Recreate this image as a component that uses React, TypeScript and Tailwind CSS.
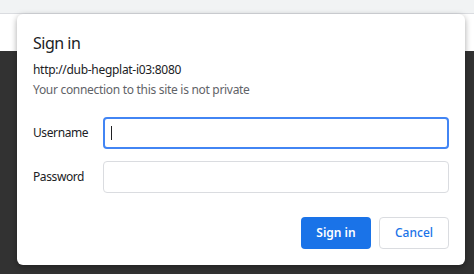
import React from 'react';

const font = { fontFamily: '"Noto Sans", "Open Sans", sans-serif' };

function Field({ label, focused }: { label: string; focused?: boolean }) {
  return (
    <div className="flex items-center h-[32px]">
      <div className="w-[70px] shrink-0 text-[12px] tracking-[-0.4px] text-[#202124]">{label}</div>
      <div
        className={`flex-1 h-[32px] rounded-[4px] flex items-center ${
          focused ? 'border-2 border-[#4285f4] pl-[6px]' : 'border border-[#dadce0] pl-[7px]'
        }`}
      >
        {focused && <span className="block w-px h-[14px] bg-[#202124]" />}
      </div>
    </div>
  );
}

export default function App() {
  return (
    <div className="relative w-[474px] h-[274px] overflow-hidden flex flex-col" style={font}>
      {/* browser behind the dialog */}
      <div className="h-[14px] bg-[#f1f3f4] border-b border-[#dadce0]" />
      <div className="h-[37px] bg-white" />
      <div className="flex-1 bg-[#323232]" />

      {/* Sign in dialog */}
      <div className="absolute left-[17px] top-[14px] w-[448px] h-[251px] bg-white rounded-[6px] shadow-[0_2px_6px_rgba(0,0,0,0.35)] px-[16px] pt-[17px] pb-[16px] flex flex-col">
        <div className="text-[16px] leading-[24px] tracking-[-0.5px] text-[#202124]">Sign in</div>
        <div className="mt-[5px] text-[12px] leading-[20px] tracking-[-0.3px] text-[#202124]">
          http://dub-hegplat-i03:8080
        </div>
        <div className="text-[12px] leading-[20px] tracking-[-0.3px] text-[#5f6368]">
          Your connection to this site is not private
        </div>

        <div className="mt-[17px] flex flex-col gap-[12px]">
          <Field label="Username" focused />
          <Field label="Password" />
        </div>

        <div className="mt-[24px] flex justify-end gap-[8px]">
          <button className="w-[70px] h-[32px] rounded-[4px] bg-[#1a73e8] text-white text-[12px] font-semibold">
            Sign in
          </button>
          <button className="w-[70px] h-[32px] rounded-[4px] border border-[#dadce0] bg-white text-[#1a73e8] text-[12px] font-medium">
            Cancel
          </button>
        </div>
      </div>
    </div>
  );
}
